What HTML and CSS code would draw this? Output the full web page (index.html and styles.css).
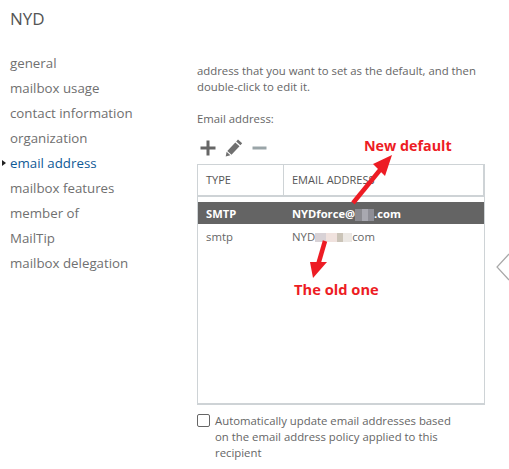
FILE: index.html
```html
<!DOCTYPE html>
<html lang="en">
<head>
<meta charset="utf-8">
<title>NYD</title>
<link rel="stylesheet" href="styles.css">
</head>
<body>
<div class="page">
  <aside class="side">
    <h1 class="title">NYD</h1>
    <nav class="nav">
      <a class="nav-item">general</a>
      <a class="nav-item">mailbox usage</a>
      <a class="nav-item">contact information</a>
      <a class="nav-item">organization</a>
      <a class="nav-item active">email address</a>
      <a class="nav-item">mailbox features</a>
      <a class="nav-item">member of</a>
      <a class="nav-item">MailTip</a>
      <a class="nav-item">mailbox delegation</a>
    </nav>
  </aside>
  <main class="main">
    <p class="intro">address that you want to set as the default, and then double-click to edit it.</p>
    <div class="label">Email address:</div>
    <div class="toolbar">
      <svg class="tool" width="16" height="16" viewBox="0 0 16 16"><path d="M6.500 0.500h3v6h6v3h-6v6h-3v-6h-6v-3h6z" fill="#666"/></svg>
      <svg class="tool" width="18" height="18" viewBox="0 0 18 18"><path d="M13 0.500l4.200 3.700-1.800 2-4.200-3.700zM10.300 3.500l4.200 3.700-8 8.500-4.200-3.700zM1.600 12.800l3.800 3.400-4.700 1.300z" fill="#707070"/></svg>
      <svg class="tool" width="15" height="16" viewBox="0 0 15 16"><path d="M0.500 6.500h14v3h-14z" fill="#9aa5a8"/></svg>
    </div>
    <div class="table">
      <div class="thead">
        <div class="th th-type">TYPE</div>
        <div class="th">EMAIL ADDRESS</div>
      </div>
      <div class="row selected">
        <span class="c-type">SMTP</span>
        <span>NYDforce@<i class="blur b-dark"></i>.com</span>
      </div>
      <div class="row">
        <span class="c-type">smtp</span>
        <span>NYD<i class="blur b-light"></i>com</span>
      </div>
    </div>
    <label class="check">
      <span class="box"></span>
      <span class="check-text">Automatically update email addresses based on the email address policy applied to this recipient</span>
    </label>
  </main>
</div>
<svg class="arrows" width="509" height="469" viewBox="0 0 509 469">
  <path d="M353 203L380 170" stroke="#ed1c24" stroke-width="4.500" fill="none"/>
  <path d="M392 155L385 176 373 164z" fill="#ed1c24"/>
  <path d="M325 241L318 265" stroke="#ed1c24" stroke-width="4.500" fill="none"/>
  <path d="M313 278L310 262 327 262z" fill="#ed1c24"/>
</svg>
<div class="note note-new">New default</div>
<div class="note note-old">The old one</div>
<svg class="chevron" width="14" height="30" viewBox="0 0 14 30"><path d="M13 1L1 14 13 27" fill="none" stroke="#a8a8a8" stroke-width="1.200"/></svg>
</body>
</html>
```
FILE: styles.css
```css
* { box-sizing: border-box; }
html, body { margin: 0; padding: 0; background: #fff; }
body { width: 509px; height: 469px; overflow: hidden; position: relative; font-family: "Open Sans", "Noto Sans", sans-serif; color: #666; }
.page { display: grid; grid-template-columns: 197px 288px; height: 469px; }
.side { padding-left: 10px; }
.title { margin: 7px 0 0; font-size: 17px; line-height: 23px; font-weight: 400; color: #555; }
.nav { display: flex; flex-direction: column; margin-top: 21px; }
.nav-item { position: relative; font-size: 13.300px; line-height: 25px; color: #707070; }
.nav-item.active { color: #0f5a96; }
.nav-item.active::before { content: ""; position: absolute; left: -8px; top: 9px; border-left: 4px solid #222; border-top: 3.500px solid transparent; border-bottom: 3.500px solid transparent; }
.main { padding-top: 63px; font-size: 11.350px; }
.intro { margin: 0; line-height: 16px; width: 285px; color: #666; }
.label { margin-top: 16px; line-height: 16px; }
.toolbar { display: flex; align-items: center; gap: 9px; height: 24px; margin-top: 9px; padding-left: 3px; }
.tool { display: block; flex: none; }
.table { margin-top: 4px; height: 241px; border: 2px solid #ced3d6; border-width: 1px 1px 2px 1px; }
.thead { display: flex; height: 32px; border: 1px solid #ced3d6; border-width: 0 1px 2px 0; font-size: 11px; color: #555; }
.th { padding: 0 8px; line-height: 30px; }
.th-type { width: 86px; border-right: 1px solid #ced3d6; }
.row { display: flex; height: 24px; line-height: 26px; font-size: 11.350px; color: #666; }
.c-type { width: 86px; padding-left: 8px; flex: none; }
.row span + span { padding-left: 8px; }
.row.selected { height: 22px; line-height: 23px; margin-top: 5px; background: #646464; color: #fff; font-weight: 700; font-size: 11.200px; }
.blur { display: inline-block; vertical-align: middle; height: 9px; }
.b-dark { width: 19px; height: 12px; background: linear-gradient(90deg, #8a8a90 0 35%, #a8a8b0 35% 70%, #8e8e96 70% 100%); }
.b-light { width: 37px; background: linear-gradient(90deg, #d8d2d6 0 30%, #f0e2de 30% 60%, #cbc4b8 60% 75%, #ece8e4 75% 100%); }
.check { display: flex; gap: 5px; margin-top: 8px; line-height: 16px; }
.check-text { width: 240px; }
.box { flex: none; width: 13px; height: 13px; margin-top: 1px; border: 1px solid #666; border-radius: 2px; }
.arrows { position: absolute; left: 0; top: 0; pointer-events: none; }
.note { position: absolute; font-family: "Open Sans", sans-serif; font-size: 14.300px; line-height: 18px; font-weight: 700; color: #ed1c24; white-space: nowrap; }
.note-new { left: 364px; top: 137px; }
.note-old { left: 294px; top: 280px; font-size: 14.700px; }
.chevron { position: absolute; left: 496px; top: 253px; }
```
